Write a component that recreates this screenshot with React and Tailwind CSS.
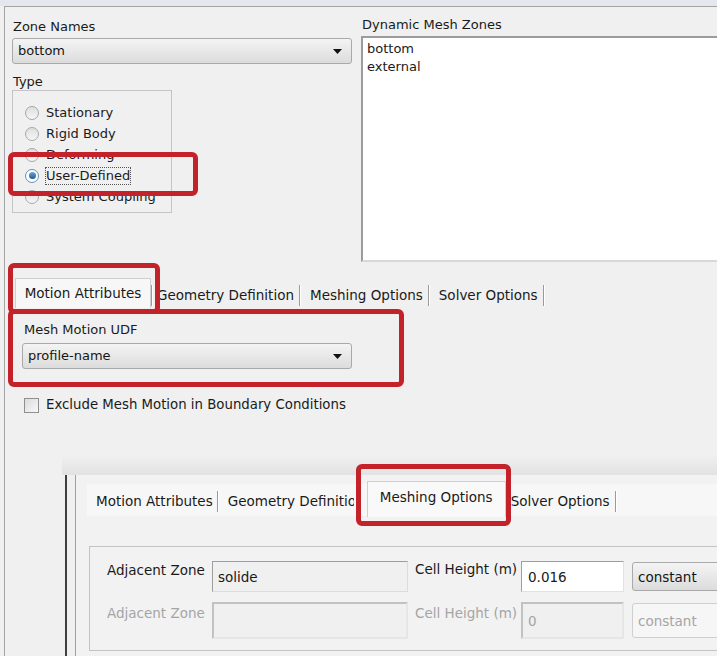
const Combo = ({ value, className = '', disabled = false }) => (
  <div
    className={`flex items-center justify-between rounded-[3px] border pl-[5px] pr-[9px] ${
      disabled
        ? 'border-[#c6c6c6] bg-[#f4f4f4] text-[#9a9a9a]'
        : 'border-[#a9a9a9] bg-linear-to-b from-[#f4f4f4] to-[#dcdcdc] text-[#151515]'
    } ${className}`}
  >
    <span>{value}</span>
    <svg width="9" height="5" viewBox="0 0 9 5">
      <path d="M0 0h9L4.5 5z" fill="#111" />
    </svg>
  </div>
)

const Radio = ({ label, checked }) => (
  <div className="flex h-[21px] items-center">
    <span
      className={`ml-[12px] flex h-[14px] w-[14px] items-center justify-center rounded-full border ${
        checked ? 'border-[#6b8fb0] bg-white' : 'border-[#a8a8a8] bg-linear-to-b from-[#dedede] to-[#f6f6f6]'
      }`}
    >
      {checked && <span className="h-[7px] w-[7px] rounded-full bg-linear-to-b from-[#6aa6d8] to-[#1c5a93]" />}
    </span>
    <span className={`ml-[7px] ${checked ? 'outline-1 outline-dotted outline-[#555]' : ''}`}>{label}</span>
  </div>
)

const Sep = ({ className = 'ml-[5px] mr-[9px]' }) => (
  <span className={`h-[21px] w-[2px] shrink-0 border-l border-r border-l-[#9a9a9a] border-r-white ${className}`} />
)

const RedBox = ({ className }) => (
  <div className={`pointer-events-none absolute rounded-[6px] border-[5px] border-[#c3222b] ${className}`} />
)

export default function App() {
  return (
    <div className="relative h-[656px] w-[717px] overflow-hidden bg-[#f0f0f0] font-['DejaVu_Sans',sans-serif] text-[13px] leading-[16px] text-[#1a1a1a]">
      <div className="h-[6px] bg-[#e4e8ee]" />
      <div className="ml-[4px] h-[650px] border-l border-t border-[#a3a3a3]">
        {/* zone picker + dynamic zones */}
        <div className="flex gap-[9px] pl-[7px]">
          <div className="w-[340px] shrink-0">
            <div className="mt-[12px] h-[16px] pl-[1px]">Zone Names</div>
            <Combo value="bottom" className="mt-[3px] h-[26px]" />
            <div className="mt-[10px] h-[16px] pl-[1px]">Type</div>
            <div className="h-[123px] w-[160px] border border-[#c5c5c5] pt-[11px]">
              <Radio label="Stationary" />
              <Radio label="Rigid Body" />
              <Radio label="Deforming" />
              <Radio label="User-Defined" checked />
              <Radio label="System Coupling" />
            </div>
          </div>
          <div className="flex-1">
            <div className="mt-[10px] h-[16px] pl-[1px]">Dynamic Mesh Zones</div>
            <div className="mt-[3px] h-[226px] w-[400px] border-2 border-r-0 border-[#9c9c9c] border-b-[#d8d8d8] bg-white pl-[4px] pt-[2px] leading-[18px]">
              <div>bottom</div>
              <div>external</div>
            </div>
          </div>
        </div>

        {/* tabs */}
        <div className="mt-[16px] flex h-[30px] items-end pl-[10px] text-[13.5px]">
          <div className="flex h-[30px] w-[136px] items-start justify-center border border-b-0 border-[#d0d0d0] bg-[#f7f7f7] pt-[6px]">
            Motion Attributes
          </div>
          <div className="flex h-[24px] items-center pb-[2px]">
            <Sep className="ml-0 mr-[4px]" />
            <span>Geometry Definition</span>
            <Sep />
            <span>Meshing Options</span>
            <Sep />
            <span>Solver Options</span>
            <Sep />
          </div>
        </div>

        <div className="pl-[19px]">
          <div className="mt-[14px] h-[16px]">Mesh Motion UDF</div>
          <Combo value="profile-name" className="-ml-[2px] mt-[5px] h-[26px] w-[330px]" />
          <div className="mt-[28px] flex h-[16px] items-center">
            <span className="h-[15px] w-[15px] border border-[#8f8f8f] bg-linear-to-br from-[#dcdcdc] to-[#f8f8f8]" />
            <span className="ml-[7px] text-[13.3px]">Exclude Mesh Motion in Boundary Conditions</span>
          </div>
        </div>

        {/* inset screenshot: meshing options */}
        <div className="ml-[57px] mt-[42px]">
          <div className="h-[20px] bg-linear-to-b from-[#f0f0f0] to-[#e2e2e2]" />
          <div className="flex h-[200px]">
            <div className="ml-[3px] w-[2px] shrink-0 bg-[#3f3f3f]" />
            <div className="ml-[8px] w-[1px] shrink-0 bg-[#a0a0a0]" />
            <div className="flex-1 bg-[#f2f2f2] pl-[11px] text-[13.5px]">
              <div className="mt-[9px] flex h-[32px] items-end bg-[#f7f7f7]">
                <div className="flex h-[28px] items-center pb-[2px] pl-[9px]">
                  <span>Motion Attributes</span>
                  <Sep className="ml-[4px] mr-[9px]" />
                  <span className="w-[126px] overflow-hidden whitespace-nowrap">Geometry Definition</span>
                </div>
                <div className="-mb-[1px] ml-[13px] flex h-[36px] w-[139px] items-center justify-center border border-b-0 border-[#d0d0d0] bg-[#f9f9f9] pb-[6px]">
                  Meshing Options
                </div>
                <div className="flex h-[28px] items-center pb-[2px] pl-[5px]">
                  <span>Solver Options</span>
                  <Sep className="ml-[5px]" />
                </div>
              </div>
              <div className="ml-[2px] mt-[30px] h-[105px] border border-r-0 border-[#c3c3c3] pl-[17px] pt-[14px]">
                <div className="flex items-start">
                  <span className="w-[105px] shrink-0 pt-[1px]">Adjacent Zone</span>
                  <div className="flex h-[31px] w-[196px] shrink-0 items-center border border-[#9d9d9d] border-b-[#dcdcdc] border-r-[#dcdcdc] bg-[#f0f0f0] pl-[5px]">
                    solide
                  </div>
                  <span className="ml-[7px] w-[106px] shrink-0">Cell Height (m)</span>
                  <div className="flex h-[31px] w-[103px] shrink-0 items-center border border-[#9d9d9d] border-b-[#e2e2e2] border-r-[#e2e2e2] bg-white pl-[6px]">
                    0.016
                  </div>
                  <Combo value="constant" className="ml-[8px] mt-[1px] h-[29px] w-[110px] shrink-0" />
                </div>
                <div className="mt-[10px] flex items-start text-[#a5a5a5]">
                  <span className="w-[105px] shrink-0 pt-[3px]">Adjacent Zone</span>
                  <div className="h-[37px] w-[196px] shrink-0 border-2 border-[#c2c2c2] border-b-[#e6e6e6] border-r-[#e6e6e6] bg-[#f0f0f0]" />
                  <span className="ml-[7px] w-[106px] shrink-0 pt-[3px]">Cell Height (m)</span>
                  <div className="flex h-[37px] w-[103px] shrink-0 items-center border-2 border-[#c2c2c2] border-b-[#e6e6e6] border-r-[#e6e6e6] bg-[#f0f0f0] pl-[5px]">
                    0
                  </div>
                  <div className="ml-[8px] mt-[1px] flex h-[35px] w-[110px] shrink-0 items-center rounded-[3px] border border-[#cfcfcf] bg-[#f6f6f6] pl-[5px]">
                    constant
                  </div>
                </div>
              </div>
            </div>
          </div>
        </div>
      </div>

      <RedBox className="left-[8px] top-[152px] h-[44px] w-[190px]" />
      <RedBox className="left-[8px] top-[263px] h-[51px] w-[152px]" />
      <RedBox className="left-[8px] top-[309px] h-[78px] w-[396px]" />
      <RedBox className="left-[356px] top-[464px] h-[62px] w-[155px]" />
    </div>
  )
}
